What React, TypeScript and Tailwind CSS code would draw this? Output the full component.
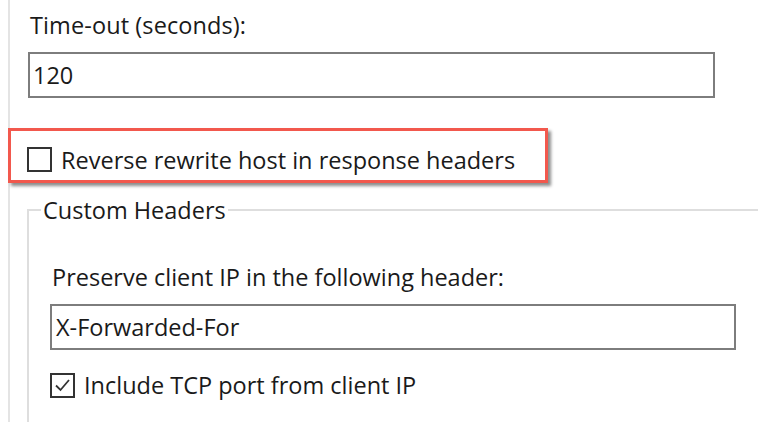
export default function App() {
  return (
    <div className="w-[758px] h-[422px] bg-white overflow-hidden text-[23.5px] leading-[30px] text-[#1a1a1a] font-['Open_Sans',sans-serif]">
      <div className="ml-2 h-full border-l-2 border-[#e4e4e4] pl-[18px] pt-[10px]">
        <div className="pl-[2px] tracking-[0.1px]">Time-out (seconds):</div>
        <div className="mt-[12px] w-[687px] h-[46px] border-2 border-[#7d7d7d] flex items-center pl-[3px]">120</div>

        <div className="mt-[30px] ml-[-20px] w-[540px] h-[55px] border-[3px] border-[#f2584d] shadow-[3px_3px_3px_rgba(0,0,0,0.45)] flex items-center pl-[16px] pt-[8px] gap-[9px]">
          <div className="w-[25px] h-[25px] border-2 border-[#333] bg-white" />
          <span>Reverse rewrite host in response headers</span>
        </div>

        <fieldset className="mt-[13px] ml-[-1px] border-t-2 border-l-2 border-[#dedede] h-[260px]">
          <legend className="ml-[12px] px-[2px] leading-[28px]">Custom Headers</legend>
          <div className="pl-[21px] pt-[38px]">
            <div className="pl-[2px]">Preserve client IP in the following header:</div>
            <div className="mt-[12px] w-[686px] h-[46px] border-2 border-[#7d7d7d] flex items-center pl-[4px]">X-Forwarded-For</div>
            <div className="mt-[20px] flex items-center gap-[9px]">
              <div className="w-[25px] h-[25px] border-2 border-[#333] bg-white flex items-center justify-center">
                <svg width="19" height="19" viewBox="0 0 19 19" fill="none">
                  <path d="M3 9.5 L7.5 14 L16 4" stroke="#333" strokeWidth="1.8" />
                </svg>
              </div>
              <span>Include TCP port from client IP</span>
            </div>
          </div>
        </fieldset>
      </div>
    </div>
  );
}
